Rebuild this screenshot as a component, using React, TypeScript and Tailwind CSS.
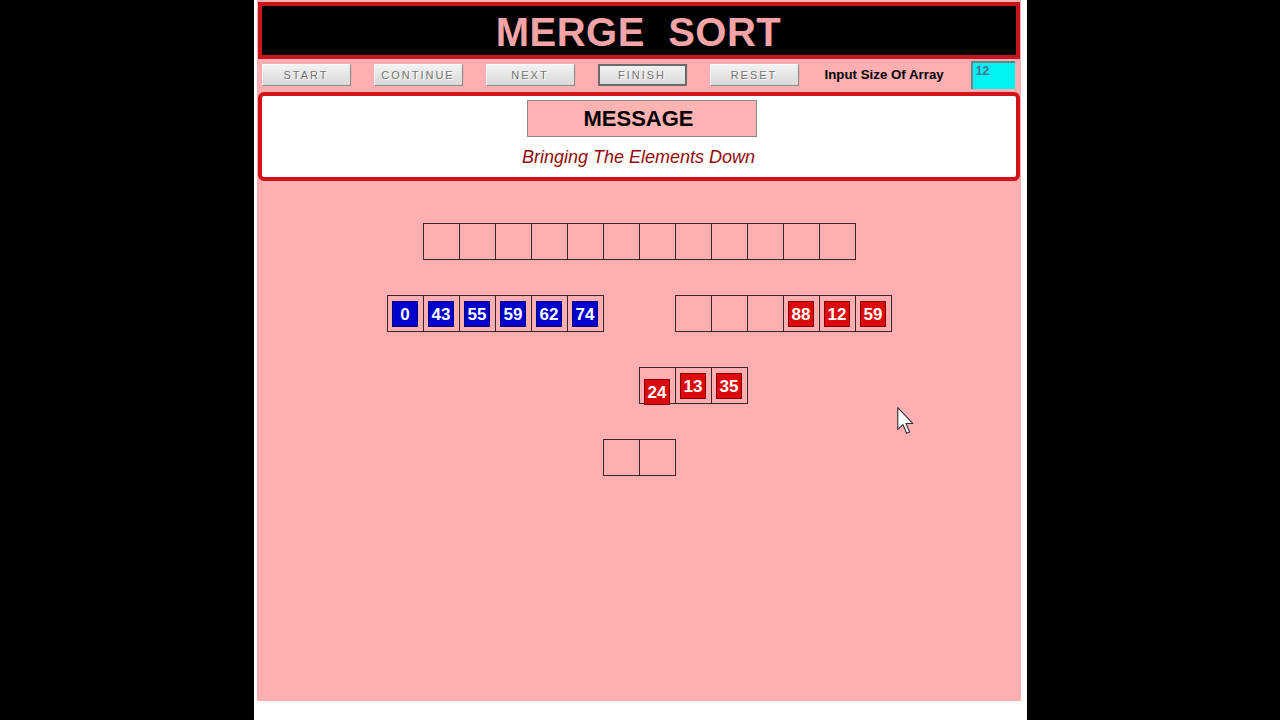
const font = { fontFamily: '"Liberation Sans", Arial, sans-serif' };

type Cell = { value?: number; color?: 'blue' | 'red'; drop?: boolean };

const buttons = ['START', 'CONTINUE', 'NEXT', 'FINISH', 'RESET'];

function ArrayRow({ cells }: { cells: Cell[] }) {
  return (
    <div className="flex border-l border-t border-[#3b2424]">
      {cells.map((c, i) => (
        <div
          key={i}
          className="w-9 h-9 border-r border-b border-[#3b2424] flex items-center justify-center"
        >
          {c.value !== undefined && (
            <div
              className={
                'w-[26px] h-[26px] flex items-center justify-center pt-[2px] text-white font-bold text-[17px] leading-none border ' +
                (c.color === 'blue'
                  ? 'bg-[#0000cc] border-[#00007a]'
                  : 'bg-[#dc0a0a] border-[#8a0000]') +
                (c.drop ? ' translate-y-[6px]' : '')
              }
            >
              {c.value}
            </div>
          )}
        </div>
      ))}
    </div>
  );
}

const empty = (n: number): Cell[] => Array.from({ length: n }, () => ({}));

export default function App() {
  const left: Cell[] = [0, 43, 55, 59, 62, 74].map((v) => ({ value: v, color: 'blue' }));
  const right: Cell[] = [
    ...empty(3),
    { value: 88, color: 'red' },
    { value: 12, color: 'red' },
    { value: 59, color: 'red' },
  ];
  const third: Cell[] = [
    { value: 24, color: 'red', drop: true },
    { value: 13, color: 'red' },
    { value: 35, color: 'red' },
  ];

  return (
    <div className="w-full h-[720px] bg-black flex justify-center overflow-hidden" style={font}>
      <div className="relative w-[773px] h-[720px] bg-white pl-[3px]">
        <div className="w-[764px] h-[701px] bg-[#ffafb1] flex flex-col">
          {/* Title bar */}
          <div className="mx-px mt-[2px] h-[57px] bg-black border-4 border-[#c4161c] flex items-center justify-center">
            <h1 className="text-[40px] font-bold text-[#f4a4a6] whitespace-pre leading-none tracking-[0.5px] mt-[3px]">
              MERGE  SORT
            </h1>
          </div>

          {/* Controls */}
          <div className="h-7 mt-[2px] flex items-center pl-[5px]">
            <div className="flex gap-[23px]">
              {buttons.map((b) => (
                <button
                  key={b}
                  className={
                    'w-[89px] h-[22px] bg-gradient-to-b from-[#f2f2f2] to-[#d9d9d9] text-[11px] tracking-[2px] text-[#727272] [text-shadow:1px_1px_0_#ffffff] flex items-center justify-center ' +
                    (b === 'FINISH'
                      ? 'border-2 border-[#6b6b6b]'
                      : 'border border-t-[#fafafa] border-l-[#fafafa] border-r-[#8a8a8a] border-b-[#8a8a8a]')
                  }
                >
                  {b}
                </button>
              ))}
            </div>
            <span className="ml-[26px] text-[13.3px] font-bold text-black">Input Size Of Array</span>
            <div className="ml-[27px] w-[44px] h-7 bg-[#00f2f2] border-l-2 border-t-2 border-[#5a8a8a] text-[12px] font-bold text-[#4b7390] pl-[3px] leading-none pt-[2px]">
              12
            </div>
          </div>

          {/* Message panel */}
          <div className="mx-px mt-[3px] h-[89px] bg-white border-4 border-[#d2141a] rounded-[6px] flex flex-col items-center pt-1">
            <div className="ml-[6px] w-[230px] h-[37px] bg-[#ffb3b3] border border-[#8a8a8a] flex items-center justify-center pr-[6px] text-[22px] font-bold text-black">
              MESSAGE
            </div>
            <p className="mt-[10px] text-[18px] italic text-[#920a0a] leading-5">Bringing The Elements Down</p>
          </div>

          {/* Merge tree */}
          <div className="mt-[42px] flex flex-col gap-[35px]">
            <div className="ml-[166px] flex">
              <ArrayRow cells={empty(12)} />
            </div>
            <div className="ml-[130px] flex gap-[71px]">
              <ArrayRow cells={left} />
              <ArrayRow cells={right} />
            </div>
            <div className="ml-[382px] flex">
              <ArrayRow cells={third} />
            </div>
            <div className="ml-[346px] flex">
              <ArrayRow cells={empty(2)} />
            </div>
          </div>
        </div>

        {/* Mouse pointer */}
        <svg
          className="absolute left-[643px] top-[407px]"
          width="17"
          height="28"
          viewBox="0 0 12 20"
        >
          <path
            d="M0.5 0.5 L0.5 16 L4.2 12.6 L6.8 18.8 L8.9 17.9 L6.4 11.8 L11.3 11.8 Z"
            fill="#ffffff"
            stroke="#333333"
            strokeWidth="0.8"
            strokeLinejoin="round"
          />
        </svg>
      </div>
    </div>
  );
}
